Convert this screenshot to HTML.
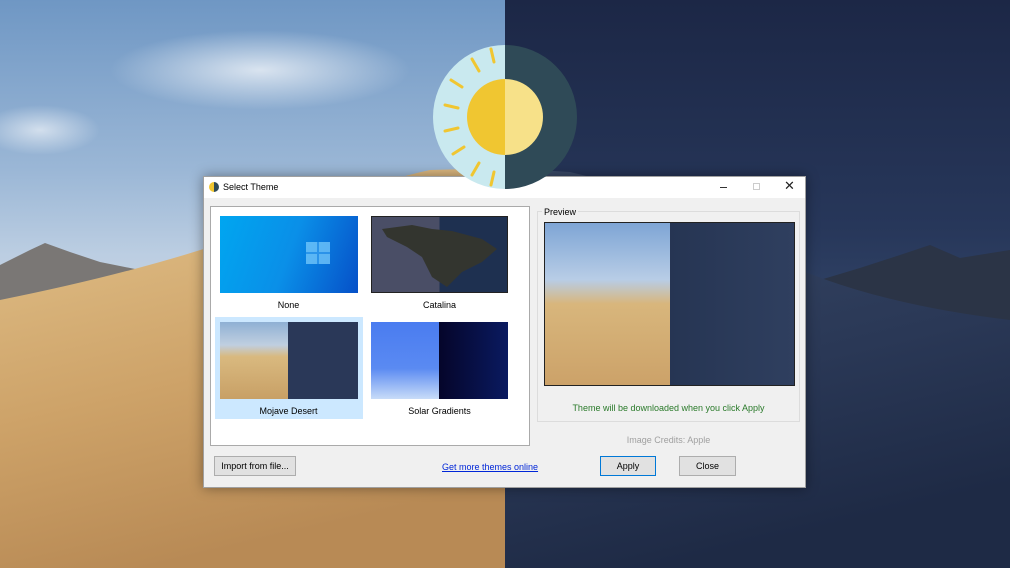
<!DOCTYPE html>
<html><head><meta charset="utf-8"><style>
*{margin:0;padding:0;box-sizing:border-box}
body{width:1010px;height:568px;overflow:hidden;position:relative;font-family:"Liberation Sans",sans-serif;font-size:9px;color:#000}
.abs{position:absolute}
.btn{position:absolute;background:#e1e1e1;border:1px solid #adadad;text-align:center;line-height:18px;font-size:9px}
.lbl{position:absolute;width:137px;text-align:center;font-size:9px}
</style></head><body>
<div class="abs" style="left:0;top:0;width:505px;height:568px;background:linear-gradient(180deg,#6f97c4 0%,#9bb7d6 30%,#bccee2 45%,#c9d3dc 55%)"></div>
<div class="abs" style="left:0;top:0;width:505px;height:568px;background:radial-gradient(ellipse 150px 40px at 260px 70px,rgba(255,255,255,.7),transparent),radial-gradient(ellipse 60px 25px at 40px 130px,rgba(255,255,255,.6),transparent)"></div>
<div class="abs" style="left:505px;top:0;width:505px;height:568px;background:linear-gradient(180deg,#1c2746 0%,#27375a 40%,#34476a 60%)"></div>
<svg class="abs" style="left:0;top:0" width="1010" height="568">
 <defs>
  <linearGradient id="sd" x1="0" y1="0" x2="0.3" y2="1"><stop offset="0" stop-color="#e4c58e"/><stop offset=".6" stop-color="#cda268"/><stop offset="1" stop-color="#b88a55"/></linearGradient>
  <linearGradient id="nd" x1="0" y1="0" x2="0.3" y2="1"><stop offset="0" stop-color="#3a4a68"/><stop offset=".6" stop-color="#2a3856"/><stop offset="1" stop-color="#1e2a45"/></linearGradient>
 </defs>
 <path d="M0 265 L30 250 L45 243 L70 252 L100 262 L150 272 L200 300 L200 330 L0 330Z" fill="#7a7775"/>
 <path d="M0 300 Q150 270 260 230 Q360 185 430 170 L505 168 L505 568 L0 568Z" fill="url(#sd)"/>
 <path d="M820 280 L860 268 L900 255 L930 245 L960 258 L1010 250 L1010 330 L820 330Z" fill="#2b3446"/>
 <path d="M505 168 L570 172 Q650 190 740 240 Q840 300 1010 320 L1010 568 L505 568Z" fill="url(#nd)"/>
</svg>

<div class="abs" style="left:203px;top:176px;width:603px;height:312px;background:#f0f0f0;border:1px solid #a0a0a0;box-shadow:0 0 12px rgba(0,0,0,.4)">
 <div class="abs" style="left:0;top:0;width:601px;height:21px;background:#fff"></div>
 <div class="abs" style="left:5px;top:5px;width:10px;height:10px;border-radius:50%;background:linear-gradient(90deg,#f0c631 50%,#2f4a57 50%)"></div>
 <div class="abs" style="left:19px;top:5px;font-size:9px">Select Theme</div>
 <div class="abs" style="left:516px;top:10px;width:7px;height:1px;background:#333"></div>
 <div class="abs" style="left:549px;top:6px;width:7px;height:7px;border:1px solid #ccc"></div>
 <div class="abs" style="left:580px;top:1px;font-size:13px;color:#222">✕</div>
 <div class="abs" style="left:6px;top:29px;width:320px;height:240px;background:#fff;border:1px solid #aaa"></div>
 <div class="abs" style="left:16px;top:39px;width:138px;height:77px;background:linear-gradient(110deg,#00a6f0,#0a8fe8 50%,#0650c8)"></div>
 <div class="abs" style="left:102px;top:65px;width:24px;height:22px;background:linear-gradient(90deg,transparent 11px,#3aa0f0 11px,#3aa0f0 13px,transparent 13px),linear-gradient(0deg,transparent 10px,#3aa0f0 10px,#3aa0f0 12px,transparent 12px),#7fd0ff;opacity:.7"></div>
 <div class="abs" style="left:167px;top:39px;width:137px;height:77px;border:1px solid #222;background:linear-gradient(90deg,#4a4e66 50%,#1e3050 50%)"></div>
 <svg class="abs" style="left:168px;top:40px" width="135" height="75"><path d="M10 12 L40 8 L60 12 L80 14 L110 22 L125 32 L110 45 L90 55 L75 70 L60 60 L50 40 L35 30 L15 20Z" fill="#33352f"/></svg>
 <div class="lbl" style="left:16px;top:123px">None</div>
 <div class="lbl" style="left:167px;top:123px">Catalina</div>
 <div class="abs" style="left:11px;top:140px;width:148px;height:102px;background:#cce8ff"></div>
 <div class="abs" style="left:16px;top:145px;width:138px;height:77px;background:linear-gradient(90deg,transparent 68px,#2a3858 68px),linear-gradient(180deg,#8fb0d4 0%,#c0cfe0 30%,#d9b97f 45%,#c8a066 100%)"></div>
 <div class="abs" style="left:167px;top:145px;width:137px;height:77px;background:linear-gradient(90deg,transparent 68px,#05052a 68px,#0a1a60),linear-gradient(180deg,#4a7cf0,#5a8af2 60%,#c8dcf8)"></div>
 <div class="lbl" style="left:16px;top:229px">Mojave Desert</div>
 <div class="lbl" style="left:167px;top:229px">Solar Gradients</div>
 <div class="abs" style="left:333px;top:34px;width:263px;height:211px;border:1px solid #dcdcdc"></div>
 <div class="abs" style="left:338px;top:30px;background:#f0f0f0;padding:0 2px">Preview</div>
 <div class="abs" style="left:340px;top:45px;width:251px;height:164px;border:1px solid #222;background:linear-gradient(90deg,transparent 125px,#263553 125px,#2f3f5f),linear-gradient(180deg,#7ea5d5 0%,#b8cde6 35%,#d8b67c 50%,#cca269 100%)"></div>
 <div class="abs" style="left:333px;top:226px;width:263px;text-align:center;color:#2a7a2a">Theme will be downloaded when you click Apply</div>
 <div class="abs" style="left:333px;top:258px;width:263px;text-align:center;color:#a0a0a0">Image Credits: Apple</div>
 <div class="btn" style="left:10px;top:279px;width:82px;height:20px">Import from file...</div>
 <div class="abs" style="left:238px;top:285px;color:#0026d8;text-decoration:underline">Get more themes online</div>
 <div class="btn" style="left:396px;top:279px;width:56px;height:20px;border:1px solid #0078d7">Apply</div>
 <div class="btn" style="left:475px;top:279px;width:57px;height:20px">Close</div>
</div>

<svg class="abs" style="left:425px;top:37px" width="160" height="160" viewBox="-80 -80 160 160">
 <defs><clipPath id="l"><rect x="-80" y="-80" width="80" height="160"/></clipPath><clipPath id="r"><rect x="0" y="-80" width="80" height="160"/></clipPath></defs>
 <circle r="72" fill="#c9e9ef" clip-path="url(#l)"/>
 <circle r="72" fill="#2f4a57" clip-path="url(#r)"/>
 <circle r="38" fill="#f0c631" clip-path="url(#l)"/>
 <circle r="38" fill="#f7e189" clip-path="url(#r)"/>
 <g stroke="#f0c631" stroke-width="3" stroke-linecap="round">
  <line x1="-11" y1="-55" x2="-14" y2="-68"/>
  <line x1="-26" y1="-46" x2="-33" y2="-58"/>
  <line x1="-43" y1="-30" x2="-54" y2="-37"/>
  <line x1="-47" y1="-9" x2="-60" y2="-12"/>
  <line x1="-47" y1="11" x2="-60" y2="14"/>
  <line x1="-41" y1="30" x2="-52" y2="37"/>
  <line x1="-26" y1="46" x2="-33" y2="58"/>
  <line x1="-11" y1="55" x2="-14" y2="68"/>
 </g>
</svg>
</body></html>
